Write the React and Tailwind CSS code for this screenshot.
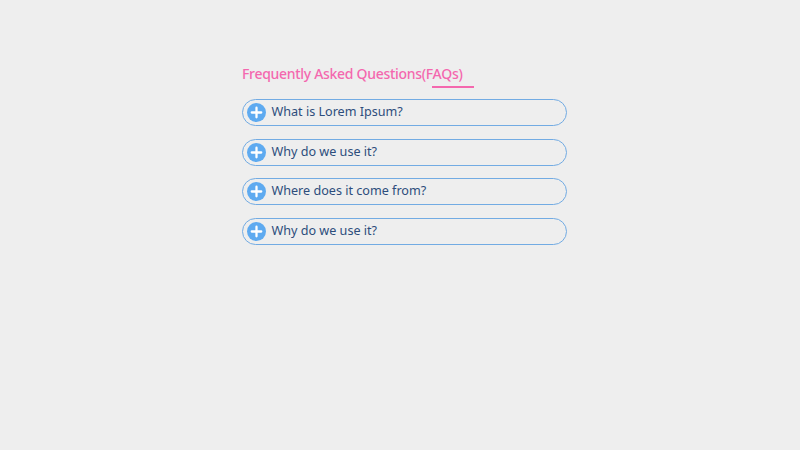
const faqs = [
  'What is Lorem Ipsum?',
  'Why do we use it?',
  'Where does it come from?',
  'Why do we use it?',
];

function PlusCircle() {
  return (
    <svg width="19" height="19" viewBox="0 0 20 20" className="shrink-0">
      <circle cx="10" cy="10" r="10" fill="#5eaaf0" />
      <path d="M10 5v10M5 10h10" stroke="#fff" strokeWidth="2.4" strokeLinecap="round" />
    </svg>
  );
}

export default function App() {
  return (
    <div
      className="min-h-screen w-full bg-[#eeeeee] pt-[64px]"
      style={{ fontFamily: '"Noto Sans", "Open Sans", sans-serif' }}
    >
      <div className="ml-[242px] w-[325px]">
        <h2 className="relative text-[14px] leading-[20px] font-medium text-[#f468ae] tracking-[-0.3px]">
          Frequently Asked Questions(FAQs)
          <span className="absolute left-[190px] top-[22px] h-[1.5px] w-[42px] bg-[#f468ae]" />
        </h2>
        <div className="mt-[15px] flex flex-col gap-[12.5px]">
          {faqs.map((q, i) => (
            <div
              key={i}
              className="flex h-[27px] items-center gap-[6px] rounded-full border-[1.5px] border-[#72abe3] pl-[3.5px]"
            >
              <PlusCircle />
              <span className="text-[12.6px] leading-none text-[#2d4d7c]">{q}</span>
            </div>
          ))}
        </div>
      </div>
    </div>
  );
}
